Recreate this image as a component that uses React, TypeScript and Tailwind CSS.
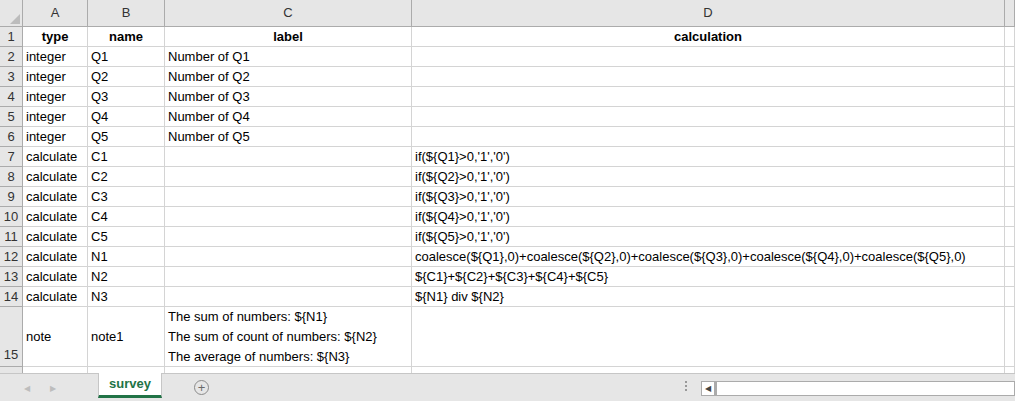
import React from 'react';

const rows: string[][] = [
  ['type', 'name', 'label', 'calculation'],
  ['integer', 'Q1', 'Number of Q1', ''],
  ['integer', 'Q2', 'Number of Q2', ''],
  ['integer', 'Q3', 'Number of Q3', ''],
  ['integer', 'Q4', 'Number of Q4', ''],
  ['integer', 'Q5', 'Number of Q5', ''],
  ['calculate', 'C1', '', "if(${Q1}>0,'1','0')"],
  ['calculate', 'C2', '', "if(${Q2}>0,'1','0')"],
  ['calculate', 'C3', '', "if(${Q3}>0,'1','0')"],
  ['calculate', 'C4', '', "if(${Q4}>0,'1','0')"],
  ['calculate', 'C5', '', "if(${Q5}>0,'1','0')"],
  ['calculate', 'N1', '', 'coalesce(${Q1},0)+coalesce(${Q2},0)+coalesce(${Q3},0)+coalesce(${Q4},0)+coalesce(${Q5},0)'],
  ['calculate', 'N2', '', '${C1}+${C2}+${C3}+${C4}+${C5}'],
  ['calculate', 'N3', '', '${N1} div ${N2}'],
];

const cols = 'grid-cols-[23px_65px_77px_247px_593px_1fr]';
const cell = 'border-r border-b border-[#d4d4d4] px-[3px] whitespace-nowrap overflow-hidden';
const head = 'border-r border-b border-[#ababab] bg-[#e6e6e6] text-[#333] flex items-center justify-center';

export default function App() {
  return (
    <div className="w-[1015px] h-[401px] bg-white flex flex-col overflow-hidden text-[13px] text-black" style={{ fontFamily: '"Liberation Sans", Arial, sans-serif' }}>
      <div className="flex-1 overflow-hidden">
        <div className={`grid ${cols} h-[27px]`}>
          <div className={`${head} relative`}>
            <svg width="10" height="10" className="absolute right-[2px] bottom-[2px]"><polygon points="10,0 10,10 0,10" fill="#bcbcbc" /></svg>
          </div>
          {['A', 'B', 'C', 'D', ''].map((c, i) => (
            <div key={i} className={head}>{c}</div>
          ))}
        </div>
        {rows.map((r, i) => (
          <div key={i} className={`grid ${cols} h-[20px] leading-[19px]`}>
            <div className={`${head} text-[13px]`}>{i + 1}</div>
            {r.map((v, j) => (
              <div key={j} className={`${cell} ${i === 0 ? 'font-bold text-center' : ''}`}>{v}</div>
            ))}
            <div className={cell}></div>
          </div>
        ))}
        <div className={`grid ${cols} h-[60px] leading-[20px]`}>
          <div className={`${head} !items-end pb-[1px]`}>15</div>
          <div className={`${cell} flex items-center`}>note</div>
          <div className={`${cell} flex items-center`}>note1</div>
          <div className={cell}>
            <div>The sum of numbers: {'${N1}'}</div>
            <div>The sum of count of numbers: {'${N2}'}</div>
            <div>The average of numbers: {'${N3}'}</div>
          </div>
          <div className={cell}></div>
          <div className={cell}></div>
        </div>
        <div className={`grid ${cols} h-[20px]`}>
          <div className={head}></div>
          <div className={cell}></div><div className={cell}></div><div className={cell}></div><div className={cell}></div><div className={cell}></div>
        </div>
      </div>
      <div className="h-[28px] bg-[#e6e6e6] border-t border-[#c6c6c6] flex items-start shrink-0">
        <div className="w-[98px] flex items-center gap-[20px] pl-[24px] pt-[9px] text-[#bdbdbd] text-[8px]">
          <span>◀</span><span>▶</span>
        </div>
        <div className="-mt-px w-[64px] h-[25px] bg-white border-x border-[#c6c6c6] border-b-[3px] border-b-[#217346] flex items-center justify-center font-bold text-[#217346]">survey</div>
        <div className="ml-[32px] mt-[6px] w-[15px] h-[15px] rounded-full border border-[#8a8a8a] flex items-center justify-center text-[#6a6a6a] text-[13px] leading-none">+</div>
        <div className="ml-[476px] mt-[7px] flex flex-col gap-[2px]">
          <span className="w-[2px] h-[2px] bg-[#999]"></span><span className="w-[2px] h-[2px] bg-[#999]"></span><span className="w-[2px] h-[2px] bg-[#999]"></span>
        </div>
        <div className="ml-[14px] mt-[7px] flex-1 h-[15px] bg-white border border-[#ababab] flex">
          <div className="w-[15px] border-r-[3px] border-[#ababab] flex items-center justify-center text-[#444] text-[8px]">◀</div>
        </div>
      </div>
    </div>
  );
}
